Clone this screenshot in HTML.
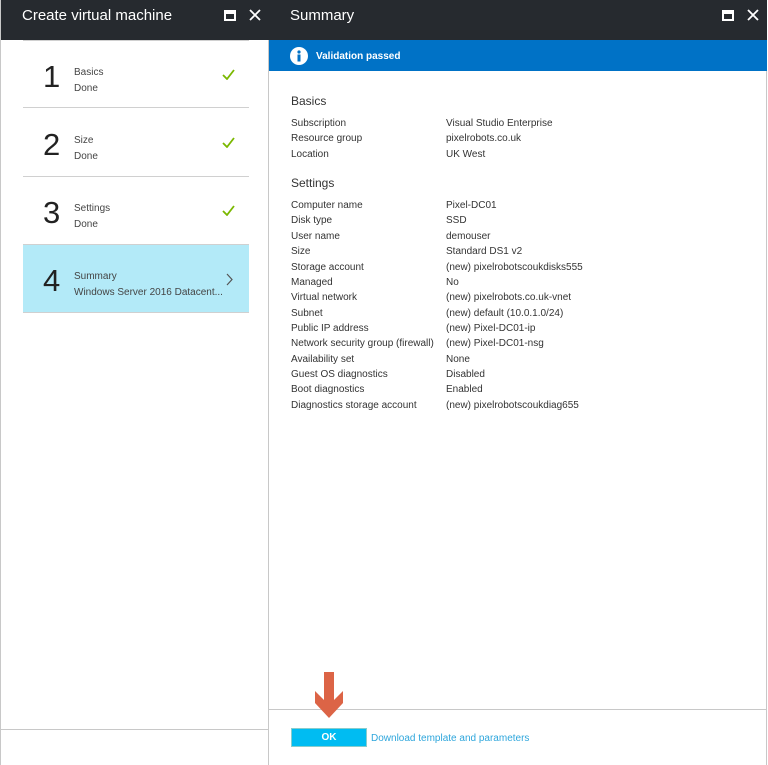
<!DOCTYPE html>
<html><head><style>
*{margin:0;padding:0;box-sizing:border-box}
body{width:768px;height:765px;background:#fff;font-family:"Liberation Sans",sans-serif;position:relative;overflow:hidden}
.hdr{position:absolute;top:0;height:40px;background:#262a2f;color:#fff;font-size:15px;line-height:31px}
.lp{position:absolute;left:0;top:0;width:269px;height:765px;border-left:1px solid #c8c8c8;border-right:1px solid #c8c8c8}
.rp{position:absolute;left:269px;top:0;width:498px;height:765px;border-right:1px solid #c8c8c8}
.step{position:absolute;left:22px;width:226px;height:68px;border-bottom:1px solid #d0d0d0}
.num{position:absolute;left:20px;top:18px;font-size:31px;color:#222}
.t1{position:absolute;left:51px;top:26px;font-size:10px;color:#444}
.t2{position:absolute;left:51px;top:42px;font-size:10px;color:#444}
.chk{position:absolute;right:14px;top:28px}
.row{position:absolute;left:22px;font-size:10px;color:#333;white-space:nowrap}
.row span{position:absolute;left:155px}
.h{position:absolute;left:22px;font-size:12px;color:#333}
</style></head><body>
<div class="lp">
 <div class="hdr" style="left:0;width:268px;padding-left:21px">Create virtual machine
  <svg style="position:absolute;left:223px;top:10px" width="12" height="11"><rect x="1" y="1" width="10" height="9" fill="none" stroke="#fff" stroke-width="2"/><rect x="1" y="1" width="10" height="3" fill="#fff"/></svg>
  <svg style="position:absolute;left:248px;top:9px" width="12" height="12"><path d="M1 1L11 11M11 1L1 11" stroke="#fff" stroke-width="1.8"/></svg>
 </div>
 <div class="step" style="top:40px;border-top:1px solid #d0d0d0"><div class="num">1</div><div class="t1">Basics</div><div class="t2">Done</div><svg class="chk" width="13" height="11"><path d="M1 6L5 10L12 1" fill="none" stroke="#7ab800" stroke-width="1.8"/></svg></div>
 <div class="step" style="top:109px"><div class="num">2</div><div class="t1">Size</div><div class="t2">Done</div><svg class="chk" width="13" height="11"><path d="M1 6L5 10L12 1" fill="none" stroke="#7ab800" stroke-width="1.8"/></svg></div>
 <div class="step" style="top:177px"><div class="num">3</div><div class="t1">Settings</div><div class="t2">Done</div><svg class="chk" width="13" height="11"><path d="M1 6L5 10L12 1" fill="none" stroke="#7ab800" stroke-width="1.8"/></svg></div>
 <div class="step" style="top:245px;background:#b3eaf8"><div class="num">4</div><div class="t1">Summary</div><div class="t2">Windows Server 2016 Datacent...</div>
  <svg style="position:absolute;right:15px;top:28px" width="8" height="13"><path d="M1 1L6 6.5L1 12" fill="none" stroke="#555" stroke-width="1.2"/></svg></div>
 <div style="position:absolute;left:0;top:729px;width:268px;border-top:1px solid #c8c8c8"></div>
</div>
<div class="rp">
 <div class="hdr" style="left:0;width:498px;padding-left:21px">Summary
  <svg style="position:absolute;left:453px;top:10px" width="12" height="11"><rect x="1" y="1" width="10" height="9" fill="none" stroke="#fff" stroke-width="2"/><rect x="1" y="1" width="10" height="3" fill="#fff"/></svg>
  <svg style="position:absolute;left:478px;top:9px" width="12" height="12"><path d="M1 1L11 11M11 1L1 11" stroke="#fff" stroke-width="1.8"/></svg>
 </div>
 <div style="position:absolute;left:0;top:40px;width:498px;height:31px;background:#0072c6;color:#fff;font-size:10px;font-weight:600;line-height:33px;padding-left:47px">Validation passed
  <svg style="position:absolute;left:21px;top:7px" width="18" height="18"><circle cx="9" cy="9" r="9" fill="#fff"/><circle cx="9" cy="5" r="1.6" fill="#0072c6"/><rect x="7.5" y="7.5" width="3" height="7" fill="#0072c6"/></svg></div>
 <div class="h" style="top:94px">Basics</div>
 <div class="row" style="top:118px">Subscription<span>Visual Studio Enterprise</span></div>
 <div class="row" style="top:133px">Resource group<span>pixelrobots.co.uk</span></div>
 <div class="row" style="top:149px">Location<span>UK West</span></div>
 <div class="h" style="top:176px">Settings</div>
 <div class="row" style="top:200px">Computer name<span>Pixel-DC01</span></div>
 <div class="row" style="top:215px">Disk type<span>SSD</span></div>
 <div class="row" style="top:231px">User name<span>demouser</span></div>
 <div class="row" style="top:246px">Size<span>Standard DS1 v2</span></div>
 <div class="row" style="top:262px">Storage account<span>(new) pixelrobotscoukdisks555</span></div>
 <div class="row" style="top:277px">Managed<span>No</span></div>
 <div class="row" style="top:292px">Virtual network<span>(new) pixelrobots.co.uk-vnet</span></div>
 <div class="row" style="top:308px">Subnet<span>(new) default (10.0.1.0/24)</span></div>
 <div class="row" style="top:323px">Public IP address<span>(new) Pixel-DC01-ip</span></div>
 <div class="row" style="top:338px">Network security group (firewall)<span>(new) Pixel-DC01-nsg</span></div>
 <div class="row" style="top:354px">Availability set<span>None</span></div>
 <div class="row" style="top:369px">Guest OS diagnostics<span>Disabled</span></div>
 <div class="row" style="top:384px">Boot diagnostics<span>Enabled</span></div>
 <div class="row" style="top:400px">Diagnostics storage account<span>(new) pixelrobotscoukdiag655</span></div>
 <div style="position:absolute;left:0;top:709px;width:498px;border-top:1px solid #c8c8c8"></div>
 <svg style="position:absolute;left:42px;top:672px" width="36" height="48"><path d="M13 0H23V28L32 19V31L18 46L4 31V19L13 28Z" fill="#dc6446"/></svg>
 <div style="position:absolute;left:22px;top:728px;width:76px;height:19px;background:#00bcf2;border:1px solid #8cc;color:#fff;font-size:10px;font-weight:bold;text-align:center;line-height:17px">OK</div>
 <div style="position:absolute;left:102px;top:733px;font-size:10px;color:#2ea6dc">Download template and parameters</div>
</div>
</body></html>
